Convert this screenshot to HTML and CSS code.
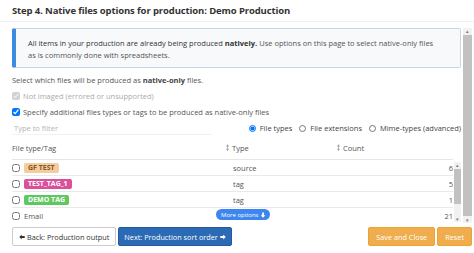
FILE: index.html
```html
<!DOCTYPE html>
<html lang="en">
<head>
    <meta charset="UTF-8">
    <title>Native files options</title>
    <link rel="stylesheet" href="styles.css">
</head>
<body>
    <div class="header">
        <h1>Step 4. Native files options for production: Demo Production</h1>
    </div>

    <div class="main">
        <div class="content">
            <div class="info">
                <div><span class="strong">All items in your production are already being produced <b>natively.</b></span> Use options on this page to select native-only files</div>
                <div>as is commonly done with spreadsheets.</div>
            </div>

            <p class="line">Select which files will be produced as <b>native-only</b> files.</p>

            <label class="line check disabled">
                <input type="checkbox" checked disabled> Not imaged (errored or unsupported)
            </label>
            <label class="line check">
                <input type="checkbox" checked> Specify additional files types or tags to be produced as native-only files
            </label>

            <div class="line filter-row">
                <input class="filter" type="text" placeholder="Type to filter">
                <div class="radios">
                    <label><input type="radio" name="kind" checked> File types</label>
                    <label><input type="radio" name="kind"> File extensions</label>
                    <label><input type="radio" name="kind"> Mime-types (advanced)</label>
                </div>
            </div>

            <div class="table">
                <div class="thead">
                    <div class="col1">File type/Tag</div>
                    <div class="col2"><svg class="sort" viewBox="0 0 4 9"><path d="M2 0 L4 3 H0 Z M2 9 L4 6 H0 Z" fill="#999"/><rect x="1.5" y="3" width="1" height="3" fill="#999"/></svg>Type</div>
                    <div class="col3"><svg class="sort" viewBox="0 0 4 9"><path d="M2 0 L4 3 H0 Z M2 9 L4 6 H0 Z" fill="#999"/><rect x="1.5" y="3" width="1" height="3" fill="#999"/></svg>Count</div>
                </div>
                <div class="tbody-wrap">
                    <div class="tbody">
                        <div class="row">
                            <div class="col1"><input type="checkbox"><span class="tag tag-tan">GF TEST</span></div>
                            <div class="col2">source</div>
                            <div class="col3 num">6</div>
                        </div>
                        <div class="row">
                            <div class="col1"><input type="checkbox"><span class="tag tag-pink">TEST_TAG_1</span></div>
                            <div class="col2">tag</div>
                            <div class="col3 num">5</div>
                        </div>
                        <div class="row">
                            <div class="col1"><input type="checkbox"><span class="tag tag-green">DEMO TAG</span></div>
                            <div class="col2">tag</div>
                            <div class="col3 num">1</div>
                        </div>
                        <div class="row">
                            <div class="col1"><input type="checkbox"><span class="plain">Email</span></div>
                            <div class="col2"></div>
                            <div class="col3 num">21</div>
                        </div>
                    </div>
                    <div class="vscroll inner">
                        <span class="arrow">&#9652;</span>
                        <span class="thumb"></span>
                        <span class="arrow">&#9662;</span>
                    </div>
                </div>
            </div>
        </div>
        <div class="vscroll outer">
            <span class="arrow">&#9652;</span>
            <span class="thumb"></span>
            <span class="arrow">&#9662;</span>
        </div>
        <button class="more-btn">More options
            <svg viewBox="0 0 10 10"><path d="M5 9.5 L1 5.5 H3.5 V1 H6.5 V5.5 H9 Z" fill="white"/></svg>
        </button>
    </div>

    <div class="footer">
        <div class="left">
            <button class="btn btn-default">
                <svg viewBox="0 0 10 10"><path d="M0.5 5 L4.5 1 V3.5 H9.5 V6.5 H4.5 V9 Z" fill="#333"/></svg>
                Back: Production output
            </button>
            <button class="btn btn-primary">Next: Production sort order
                <svg viewBox="0 0 10 10"><path d="M9.5 5 L5.5 1 V3.5 H0.5 V6.5 H5.5 V9 Z" fill="white"/></svg>
            </button>
        </div>
        <div class="right">
            <button class="btn btn-warning">Save and Close</button>
            <button class="btn btn-warning">Reset</button>
        </div>
    </div>
</body>
</html>
```

FILE: styles.css
```css
* {
    margin: 0;
    padding: 0;
    box-sizing: border-box;
}

body {
    width: 474px;
    height: 253px;
    background: white;
    font-family: "Open Sans", sans-serif;
    font-size: 7.5px;
    color: #555;
    overflow: hidden;
}

.header {
    height: 22px;
    padding: 0 12px;
    display: flex;
    align-items: center;
    border-bottom: 1px solid #f0f0f0;
}

h1 {
    font-size: 9.5px;
    font-weight: 700;
    letter-spacing: -0.12px;
    color: #333;
}

.main {
    position: relative;
    display: flex;
    height: 201px;
}

.content {
    flex: 1;
    padding: 6px 1px 0 12px;
    overflow: hidden;
}

.info {
    height: 40px;
    padding: 8px 10px 0 12px;
    background: #f7f9fb;
    border: 1px solid #c8d6e4;
    border-left: 4px solid #3d8be0;
    border-radius: 2px;
    line-height: 12px;
    color: #555;
    white-space: nowrap;
}

.info .strong {
    color: #333;
}

.line {
    display: flex;
    align-items: center;
    height: 16px;
}

p.line {
    margin-top: 4px;
}

p.line b {
    font-weight: 700;
    color: #444;
    margin: 0 2px;
}

.check input {
    width: 8px;
    height: 8px;
    margin-right: 3px;
}

.check.disabled {
    color: #aaa;
}

.filter-row {
    justify-content: space-between;
}

.filter {
    border: none;
    border-bottom: 1px solid #f2f2f2;
    font: inherit;
    width: 200px;
    height: 14px;
    padding: 0 2px;
    outline: none;
}

.filter::placeholder {
    color: #b5b5b5;
}

.radios {
    display: flex;
    gap: 7px;
    color: #444;
}

.radios label {
    display: flex;
    align-items: center;
}

.radios input {
    width: 7px;
    height: 7px;
    margin-right: 4px;
}

.table {
    margin-top: 4px;
}

.thead {
    display: grid;
    grid-template-columns: 214px 111px 1fr;
    height: 20px;
    padding-bottom: 3px;
    align-items: center;
    border-bottom: 1px solid #e6e6e6;
    margin-right: 8px;
}

.sort {
    width: 3px;
    height: 7px;
    margin-right: 3px;
}

.tbody-wrap {
    display: flex;
    height: 63px;
    overflow: hidden;
}

.tbody {
    flex: 1;
}

.row {
    display: grid;
    grid-template-columns: 214px 111px 1fr;
    height: 16px;
    align-items: center;
    border-bottom: 1px solid #e9e9e9;
    color: #555;
}

.row .col2 {
    padding-left: 7px;
}

.col1 {
    display: flex;
    align-items: center;
}

.col1 input {
    width: 8px;
    height: 8px;
    margin-right: 4px;
}

.num {
    text-align: right;
}

.tag {
    display: inline-block;
    font-weight: 700;
    font-size: 7px;
    line-height: 10px;
    padding: 0 4px;
    border-radius: 2px;
    color: white;
}

.tag-tan { background: #f3cd9e; color: #8a5427; }
.tag-pink { background: #d9519a; }
.tag-green { background: #5fc75f; }

.vscroll {
    display: flex;
    flex-direction: column;
    align-items: center;
    background: #f1f1f1;
}

.vscroll .arrow {
    font-size: 5px;
    line-height: 6px;
    color: #777;
}

.vscroll .thumb {
    flex: 1;
    width: 100%;
    background: #c1c1c1;
    margin: 1px 0;
}

.vscroll.outer {
    width: 9px;
    margin: 6px 2px 0 1px;
}

.vscroll.inner {
    width: 7px;
    margin: 2px 0 1px 1px;
}

.vscroll.inner .thumb {
    flex: none;
    height: 35px;
    margin-bottom: auto;
}

.more-btn {
    position: absolute;
    left: 216px;
    bottom: 3px;
    display: flex;
    align-items: center;
    gap: 2px;
    height: 11px;
    padding: 0 4px 0 5px;
    border: none;
    border-radius: 6px;
    background: #3d86ef;
    color: white;
    font: inherit;
    font-size: 6px;
}

.more-btn svg {
    width: 6px;
    height: 6px;
}

.footer {
    display: flex;
    justify-content: space-between;
    padding: 4px 2px 0 12px;
}

.footer .left {
    display: flex;
    gap: 2px;
}

.footer .right {
    display: flex;
    gap: 2px;
}

.btn {
    display: flex;
    align-items: center;
    gap: 2px;
    height: 19px;
    padding: 0 6px;
    border: 1px solid transparent;
    border-radius: 2px;
    font: inherit;
    font-size: 7.3px;
    color: white;
}

.btn svg {
    width: 6px;
    height: 6px;
}

.btn-default {
    background: white;
    border-color: #ccc;
    color: #333;
}

.btn-primary {
    background: #2b6bb6;
    border-color: #24599a;
    padding: 0 5px;
}

.btn-warning {
    background: #f0ad4e;
    border-color: #eea236;
    padding: 0 7px;
}
```
